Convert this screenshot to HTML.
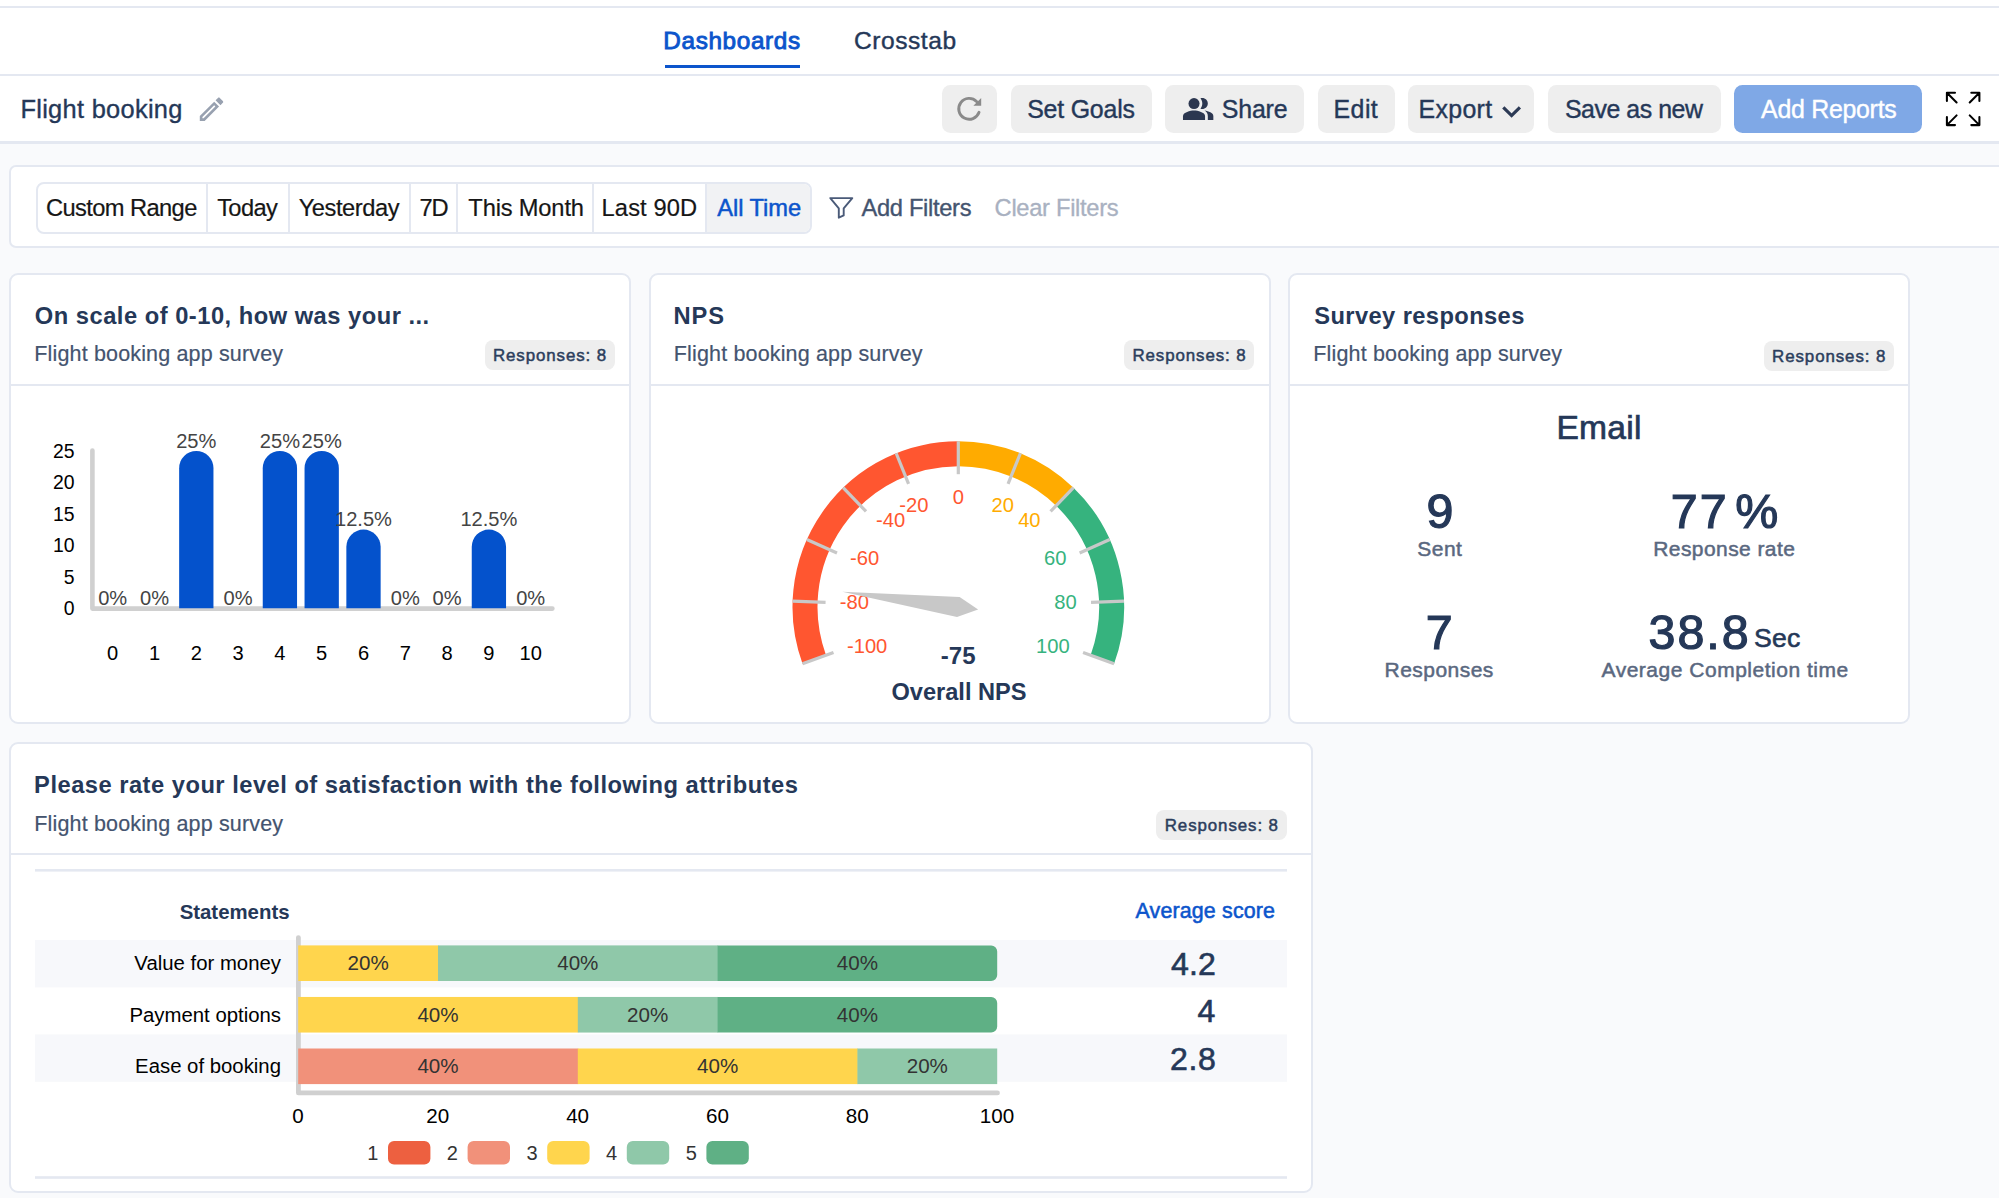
<!DOCTYPE html>
<html lang="en"><head><meta charset="utf-8"><title>Flight booking - Dashboards</title>
<style>
html,body{margin:0;padding:0}
body{width:1999px;height:1198px;overflow:hidden;background:#f9fafc;font-family:"Liberation Sans",sans-serif;position:relative}
.b{position:absolute}
button.b{border:0;padding:0;margin:0;display:block}
.t{position:absolute;margin:0;white-space:pre;line-height:0;font-weight:400;text-decoration:none}
svg{position:absolute;left:0;top:0;overflow:visible;pointer-events:none}
</style></head><body>
<nav class="tabs" aria-label="Report views">
<div class="b" style="left:0px;top:0px;width:1999px;height:142px;background:#fff"></div>
<div class="b" style="left:0px;top:5.5px;width:1999px;height:2px;background:#e4e8f1"></div>
<div class="b" style="left:0px;top:73.5px;width:1999px;height:2px;background:#e4e8f1"></div>
<a class="t" style="left:663.3px;top:40.78px;font-size:24.3px;color:#0c55cc;letter-spacing:0.648px;-webkit-text-stroke:0.9px #0c55cc;">Dashboards</a>
<div class="b" style="left:665px;top:64.8px;width:135px;height:3.2px;background:#0c55cc"></div>
<a class="t" style="left:854.05px;top:40.78px;font-size:24.6px;color:#253858;letter-spacing:0.516px;-webkit-text-stroke:0.4px #253858;">Crosstab</a>
</nav>
<header class="toolbar">
<div class="b" style="left:0px;top:141px;width:1999px;height:3.2px;background:#e4e8f1"></div>
<h1 class="t" style="left:20.42px;top:108.8px;font-size:25.4px;color:#253858;letter-spacing:0.298px;-webkit-text-stroke:0.35px #253858;">Flight booking</h1>
<button class="b" style="left:942.2px;top:85px;width:54.8px;height:48px;background:#eeeeee;border-radius:8.5px"></button>
<button class="b" style="left:1010.5px;top:85px;width:141.8px;height:48px;background:#eeeeee;border-radius:8.5px"></button>
<button class="b" style="left:1165.3px;top:85px;width:138.7px;height:48px;background:#eeeeee;border-radius:8.5px"></button>
<button class="b" style="left:1317.6px;top:85px;width:77.8px;height:48px;background:#eeeeee;border-radius:8.5px"></button>
<button class="b" style="left:1408.4px;top:85px;width:125.6px;height:48px;background:#eeeeee;border-radius:8.5px"></button>
<button class="b" style="left:1547.7px;top:85px;width:173.3px;height:48px;background:#eeeeee;border-radius:8.5px"></button>
<button class="b" style="left:1734.4px;top:85px;width:187.9px;height:48px;background:#7fa8e6;border-radius:8.5px"></button>
<span class="t" style="left:1027.22px;top:109.17px;font-size:24.9px;color:#253858;letter-spacing:-0.198px;-webkit-text-stroke:0.4px #253858;">Set Goals</span>
<span class="t" style="left:1221.72px;top:109.17px;font-size:24.9px;color:#253858;letter-spacing:-0.139px;-webkit-text-stroke:0.4px #253858;">Share</span>
<span class="t" style="left:1333.55px;top:109.17px;font-size:24.9px;color:#253858;letter-spacing:0.451px;-webkit-text-stroke:0.4px #253858;">Edit</span>
<span class="t" style="left:1418.45px;top:109.17px;font-size:24.9px;color:#253858;letter-spacing:0.359px;-webkit-text-stroke:0.4px #253858;">Export</span>
<span class="t" style="left:1564.92px;top:109.17px;font-size:24.9px;color:#253858;letter-spacing:-0.449px;-webkit-text-stroke:0.4px #253858;">Save as new</span>
<span class="t" style="left:1761.1px;top:109.17px;font-size:24.9px;color:#ffffff;letter-spacing:-0.273px;-webkit-text-stroke:0.4px #ffffff;">Add Reports</span>
<svg width="1999" height="1198" viewBox="0 0 1999 1198" role="img" aria-label="toolbar icons" font-family="Liberation Sans, sans-serif">
<path transform="translate(195.9 93.6) scale(1.3)" fill="#98a1b0" d="M14.06 9.02l.92.92L5.92 19H5v-.92l9.06-9.06M17.66 3c-.25 0-.51.1-.7.29l-1.83 1.83 3.75 3.75 1.83-1.83c.39-.39.39-1.02 0-1.41l-2.34-2.34c-.2-.2-.45-.29-.71-.29zm-3.6 3.19L3 17.25V21h3.75L17.81 9.94l-3.75-3.75z"/>
<path d="M979.06 112.27 A10.45 10.45 0 1 1 976.59 101.41" fill="none" stroke="#8a8a8a" stroke-width="2.9" stroke-linecap="round"/>
<path d="M981.2 97.9 V105.8 H973.4 Z" fill="#8a8a8a"/>
<g transform="translate(1181.6 92.5) scale(1.38)" fill="#2c3750"><path d="M16.67 13.13C18.04 14.06 19 15.32 19 17v3h4v-3c0-2.18-3.57-3.47-6.33-3.87z"/><circle cx="9" cy="8" r="4"/><path d="M15 12c2.21 0 4-1.79 4-4s-1.79-4-4-4c-.47 0-.91.1-1.33.24C14.5 5.27 15 6.58 15 8s-.5 2.73-1.33 3.76c.42.14.86.24 1.33.24z"/><path d="M9 13c-2.67 0-8 1.34-8 4v3h16v-3c0-2.66-5.33-4-8-4z"/></g>
<path d="M1503.3 107.4 L1511.6 115.6 L1519.9 107.4" fill="none" stroke="#2c3a55" stroke-width="3.2"/>
<path d="M1946.9 100.9 V92.8 H1955 M1946.9 92.8 L1956.6 102.5 M1971.3 92.8 H1979.4 V100.9 M1979.4 92.8 L1969.7 102.5 M1946.9 117 V125.1 H1955 M1946.9 125.1 L1956.6 115.4 M1979.4 117 V125.1 H1971.3 M1979.4 125.1 L1969.7 115.4" fill="none" stroke="#000" stroke-width="2.05" stroke-linecap="round" stroke-linejoin="round"/>
</svg>
</header>
<section class="filters" aria-label="Date range and filters">
<div class="b" style="left:9px;top:165px;width:2001px;height:83px;background:#fff;border:2px solid #e4e8f1;border-radius:7px;box-sizing:border-box"></div>
<div class="b" style="left:35.5px;top:181.5px;width:776px;height:52px;background:#fff;border:2px solid #e4e8f1;border-radius:8px;box-sizing:border-box"></div>
<div class="b" style="left:706px;top:183.5px;width:103.5px;height:48px;background:#f1f2f4;border-radius:0 6px 6px 0"></div>
<div class="b" style="left:205.7px;top:183px;width:2px;height:49px;background:#e4e8f1"></div>
<div class="b" style="left:287.6px;top:183px;width:2px;height:49px;background:#e4e8f1"></div>
<div class="b" style="left:408.6px;top:183px;width:2px;height:49px;background:#e4e8f1"></div>
<div class="b" style="left:456.3px;top:183px;width:2px;height:49px;background:#e4e8f1"></div>
<div class="b" style="left:591.8px;top:183px;width:2px;height:49px;background:#e4e8f1"></div>
<div class="b" style="left:705px;top:183px;width:2px;height:49px;background:#e4e8f1"></div>
<span class="t" style="left:45.89px;top:207.79px;font-size:23.7px;color:#161616;letter-spacing:-0.591px;-webkit-text-stroke:0.2px #161616;">Custom Range</span>
<span class="t" style="left:217.13px;top:207.79px;font-size:23.7px;color:#161616;letter-spacing:-0.593px;-webkit-text-stroke:0.2px #161616;">Today</span>
<span class="t" style="left:298.63px;top:207.79px;font-size:23.7px;color:#161616;letter-spacing:-0.445px;-webkit-text-stroke:0.2px #161616;">Yesterday</span>
<span class="t" style="left:419.49px;top:207.79px;font-size:23.7px;color:#161616;letter-spacing:-1.264px;-webkit-text-stroke:0.2px #161616;">7D</span>
<span class="t" style="left:468.33px;top:207.79px;font-size:23.7px;color:#161616;letter-spacing:-0.170px;-webkit-text-stroke:0.2px #161616;">This Month</span>
<span class="t" style="left:601.55px;top:207.79px;font-size:23.7px;color:#161616;letter-spacing:0.116px;-webkit-text-stroke:0.2px #161616;">Last 90D</span>
<span class="t" style="left:717.2px;top:207.79px;font-size:23.7px;color:#0c55cc;letter-spacing:-0.050px;-webkit-text-stroke:0.5px #0c55cc;">All Time</span>
<span class="t" style="left:861.5px;top:207.79px;font-size:23.7px;color:#44546f;letter-spacing:-0.323px;-webkit-text-stroke:0.35px #44546f;">Add Filters</span>
<span class="t" style="left:994.59px;top:207.79px;font-size:23.7px;color:#a9b1c1;letter-spacing:-0.299px;-webkit-text-stroke:0.3px #a9b1c1;">Clear Filters</span>
<svg width="1999" height="1198" viewBox="0 0 1999 1198" role="img" aria-label="filter icon" font-family="Liberation Sans, sans-serif">
<path d="M830.3 198.1 H852.3 L843.7 208.3 V215.4 L838.8 217.7 V208.3 Z" fill="none" stroke="#4a5a78" stroke-width="1.9" stroke-linejoin="round"/>
</svg>
</section>
<section class="card">
<div class="b" style="left:9px;top:272.5px;width:622px;height:451px;background:#fff;border:2px solid #e4e8f1;border-radius:9px;box-sizing:border-box"></div>
<div class="b" style="left:11px;top:383.5px;width:618px;height:2px;background:#e4e8f1"></div>
<h2 class="t" style="left:34.86px;top:315.79px;font-size:23.7px;color:#253858;font-weight:700;letter-spacing:0.501px;">On scale of 0-10, how was your ...</h2>
<span class="t" style="left:34.32px;top:354.35px;font-size:21.5px;color:#44546f;letter-spacing:0.153px;-webkit-text-stroke:0.2px #44546f;">Flight booking app survey</span>
<div class="b" style="left:484.5px;top:339.5px;width:130.3px;height:30.2px;background:#eeeeee;border-radius:8px"></div>
<span class="t" style="left:492.88px;top:355.64px;font-size:16.9px;color:#2c3e5d;letter-spacing:0.906px;-webkit-text-stroke:0.5px #2c3e5d;">Responses: 8</span>
<svg width="1999" height="1198" viewBox="0 0 1999 1198" role="img" aria-label="Bar chart of scores 0 to 10" font-family="Liberation Sans, sans-serif">
<path d="M92.4 450.6 V608.6 H552.4" fill="none" stroke="#d0d0d0" stroke-width="4.6" stroke-linecap="round" stroke-linejoin="round"/>
<path d="M179.15 608.2 V468.15 A17.15 17.15 0 0 1 213.45 468.15 V608.2 Z" fill="#0452cc"/>
<path d="M262.75 608.2 V468.15 A17.15 17.15 0 0 1 297.05 468.15 V608.2 Z" fill="#0452cc"/>
<path d="M304.55 608.2 V468.15 A17.15 17.15 0 0 1 338.85 468.15 V608.2 Z" fill="#0452cc"/>
<path d="M346.35 608.2 V546.75 A17.15 17.15 0 0 1 380.65 546.75 V608.2 Z" fill="#0452cc"/>
<path d="M471.75 608.2 V546.75 A17.15 17.15 0 0 1 506.05 546.75 V608.2 Z" fill="#0452cc"/>
<text x="112.7" y="605" text-anchor="middle" font-size="20.1" fill="#444">0%</text>
<text x="154.5" y="605" text-anchor="middle" font-size="20.1" fill="#444">0%</text>
<text x="196.3" y="447.8" text-anchor="middle" font-size="20.1" fill="#444">25%</text>
<text x="238.1" y="605" text-anchor="middle" font-size="20.1" fill="#444">0%</text>
<text x="279.9" y="447.8" text-anchor="middle" font-size="20.1" fill="#444">25%</text>
<text x="321.7" y="447.8" text-anchor="middle" font-size="20.1" fill="#444">25%</text>
<text x="363.5" y="526.4" text-anchor="middle" font-size="20.1" fill="#444">12.5%</text>
<text x="405.3" y="605" text-anchor="middle" font-size="20.1" fill="#444">0%</text>
<text x="447.1" y="605" text-anchor="middle" font-size="20.1" fill="#444">0%</text>
<text x="488.9" y="526.4" text-anchor="middle" font-size="20.1" fill="#444">12.5%</text>
<text x="530.7" y="605" text-anchor="middle" font-size="20.1" fill="#444">0%</text>
<text x="112.7" y="659.5" text-anchor="middle" font-size="20.1" fill="#000">0</text>
<text x="154.5" y="659.5" text-anchor="middle" font-size="20.1" fill="#000">1</text>
<text x="196.3" y="659.5" text-anchor="middle" font-size="20.1" fill="#000">2</text>
<text x="238.1" y="659.5" text-anchor="middle" font-size="20.1" fill="#000">3</text>
<text x="279.9" y="659.5" text-anchor="middle" font-size="20.1" fill="#000">4</text>
<text x="321.7" y="659.5" text-anchor="middle" font-size="20.1" fill="#000">5</text>
<text x="363.5" y="659.5" text-anchor="middle" font-size="20.1" fill="#000">6</text>
<text x="405.3" y="659.5" text-anchor="middle" font-size="20.1" fill="#000">7</text>
<text x="447.1" y="659.5" text-anchor="middle" font-size="20.1" fill="#000">8</text>
<text x="488.9" y="659.5" text-anchor="middle" font-size="20.1" fill="#000">9</text>
<text x="530.7" y="659.5" text-anchor="middle" font-size="20.1" fill="#000">10</text>
<text x="74.6" y="615.2" text-anchor="end" font-size="19.4" fill="#000">0</text>
<text x="74.6" y="583.76" text-anchor="end" font-size="19.4" fill="#000">5</text>
<text x="74.6" y="552.32" text-anchor="end" font-size="19.4" fill="#000">10</text>
<text x="74.6" y="520.88" text-anchor="end" font-size="19.4" fill="#000">15</text>
<text x="74.6" y="489.44" text-anchor="end" font-size="19.4" fill="#000">20</text>
<text x="74.6" y="458" text-anchor="end" font-size="19.4" fill="#000">25</text>
</svg>
</section>
<section class="card">
<div class="b" style="left:648.5px;top:272.5px;width:622px;height:451px;background:#fff;border:2px solid #e4e8f1;border-radius:9px;box-sizing:border-box"></div>
<div class="b" style="left:650.5px;top:383.5px;width:618px;height:2px;background:#e4e8f1"></div>
<h2 class="t" style="left:673.62px;top:315.79px;font-size:23.7px;color:#253858;font-weight:700;letter-spacing:0.838px;">NPS</h2>
<span class="t" style="left:673.82px;top:354.35px;font-size:21.5px;color:#44546f;letter-spacing:0.153px;-webkit-text-stroke:0.2px #44546f;">Flight booking app survey</span>
<div class="b" style="left:1124px;top:339.5px;width:130.3px;height:30.2px;background:#eeeeee;border-radius:8px"></div>
<span class="t" style="left:1132.38px;top:355.64px;font-size:16.9px;color:#2c3e5d;letter-spacing:0.906px;-webkit-text-stroke:0.5px #2c3e5d;">Responses: 8</span>
<svg width="1999" height="1198" viewBox="0 0 1999 1198" role="img" aria-label="NPS gauge" font-family="Liberation Sans, sans-serif">
<path d="M814.25 659.43 A153.3 153.3 0 0 1 958.3 453.7" fill="none" stroke="#ff5630" stroke-width="25"/>
<path d="M958.3 453.7 A153.3 153.3 0 0 1 1064.79 496.73" fill="none" stroke="#ffab00" stroke-width="25"/>
<path d="M1064.79 496.73 A153.3 153.3 0 0 1 1102.35 659.43" fill="none" stroke="#36b37e" stroke-width="25"/>
<line x1="802.5" y1="663.71" x2="833.51" y2="652.42" stroke="#c8c8c8" stroke-width="3.2"/>
<line x1="792.6" y1="601.21" x2="825.58" y2="602.37" stroke="#c8c8c8" stroke-width="3.2"/>
<line x1="806.83" y1="539.56" x2="836.98" y2="552.99" stroke="#c8c8c8" stroke-width="3.2"/>
<line x1="843.13" y1="487.73" x2="866.05" y2="511.47" stroke="#c8c8c8" stroke-width="3.2"/>
<line x1="896.19" y1="453.27" x2="908.55" y2="483.87" stroke="#c8c8c8" stroke-width="3.2"/>
<line x1="958.3" y1="441.2" x2="958.3" y2="474.2" stroke="#c8c8c8" stroke-width="3.2"/>
<line x1="1020.41" y1="453.27" x2="1008.05" y2="483.87" stroke="#c8c8c8" stroke-width="3.2"/>
<line x1="1073.47" y1="487.73" x2="1050.55" y2="511.47" stroke="#c8c8c8" stroke-width="3.2"/>
<line x1="1109.77" y1="539.56" x2="1079.62" y2="552.99" stroke="#c8c8c8" stroke-width="3.2"/>
<line x1="1124" y1="601.21" x2="1091.02" y2="602.37" stroke="#c8c8c8" stroke-width="3.2"/>
<line x1="1114.1" y1="663.71" x2="1083.09" y2="652.42" stroke="#c8c8c8" stroke-width="3.2"/>
<text x="846.95" y="653.23" text-anchor="start" font-size="20.2" fill="#ff5630">-100</text>
<text x="839.87" y="608.56" text-anchor="start" font-size="20.2" fill="#ff5630">-80</text>
<text x="850.04" y="564.5" text-anchor="start" font-size="20.2" fill="#ff5630">-60</text>
<text x="875.98" y="527.46" text-anchor="start" font-size="20.2" fill="#ff5630">-40</text>
<text x="913.91" y="512.23" text-anchor="middle" font-size="20.2" fill="#ff5630">-20</text>
<text x="958.3" y="503.6" text-anchor="middle" font-size="20.2" fill="#ff5630">0</text>
<text x="1002.69" y="512.23" text-anchor="middle" font-size="20.2" fill="#ffab00">20</text>
<text x="1040.62" y="527.46" text-anchor="end" font-size="20.2" fill="#ffab00">40</text>
<text x="1066.56" y="564.5" text-anchor="end" font-size="20.2" fill="#36b37e">60</text>
<text x="1076.73" y="608.56" text-anchor="end" font-size="20.2" fill="#36b37e">80</text>
<text x="1069.65" y="653.23" text-anchor="end" font-size="20.2" fill="#36b37e">100</text>
<path d="M978.13 609.61 L959.61 597.09 L842.3 591.73 L956.99 616.91 Z" fill="#c8c8c8"/>
<text x="958.2" y="664.2" text-anchor="middle" font-size="24" fill="#253858" font-weight="700">-75</text>
<text x="959" y="700" text-anchor="middle" font-size="23.6" fill="#253858" font-weight="700">Overall NPS</text>
</svg>
</section>
<section class="card">
<div class="b" style="left:1288px;top:272.5px;width:622px;height:451px;background:#fff;border:2px solid #e4e8f1;border-radius:9px;box-sizing:border-box"></div>
<div class="b" style="left:1290px;top:383.5px;width:618px;height:2px;background:#e4e8f1"></div>
<h2 class="t" style="left:1314.23px;top:315.79px;font-size:23.7px;color:#253858;font-weight:700;letter-spacing:0.403px;">Survey responses</h2>
<span class="t" style="left:1313.32px;top:354.35px;font-size:21.5px;color:#44546f;letter-spacing:0.153px;-webkit-text-stroke:0.2px #44546f;">Flight booking app survey</span>
<div class="b" style="left:1763.7px;top:340.7px;width:130.3px;height:30.2px;background:#eeeeee;border-radius:8px"></div>
<span class="t" style="left:1772.08px;top:356.84px;font-size:16.9px;color:#2c3e5d;letter-spacing:0.906px;-webkit-text-stroke:0.5px #2c3e5d;">Responses: 8</span>
<h3 class="t" style="left:1556.38px;top:428.16px;font-size:33.6px;color:#253858;letter-spacing:0.256px;-webkit-text-stroke:0.7px #253858;">Email</h3>
<span class="t" style="left:1426.39px;top:510.83px;font-size:48.4px;color:#253858;-webkit-text-stroke:1.2px #253858;">9</span>
<span class="t" style="left:1417.34px;top:549.32px;font-size:21px;color:#5a6880;letter-spacing:0.462px;-webkit-text-stroke:0.5px #5a6880;">Sent</span>
<span class="t" style="left:1670.83px;top:510.83px;font-size:48.4px;color:#253858;letter-spacing:1.895px;-webkit-text-stroke:1.2px #253858;">77</span>
<span class="t" style="left:1735.25px;top:510.83px;font-size:48.4px;color:#253858;-webkit-text-stroke:1.2px #253858;">%</span>
<span class="t" style="left:1653.26px;top:549.32px;font-size:21px;color:#5a6880;letter-spacing:0.417px;-webkit-text-stroke:0.5px #5a6880;">Response rate</span>
<span class="t" style="left:1425.79px;top:632.23px;font-size:48.4px;color:#253858;-webkit-text-stroke:1.2px #253858;">7</span>
<span class="t" style="left:1384.56px;top:670.02px;font-size:21px;color:#5a6880;letter-spacing:0.467px;-webkit-text-stroke:0.5px #5a6880;">Responses</span>
<span class="t" style="left:1648.59px;top:632.23px;font-size:48.4px;color:#253858;letter-spacing:1.958px;-webkit-text-stroke:1.2px #253858;">38.8</span>
<span class="t" style="left:1753.97px;top:638.08px;font-size:26.6px;color:#253858;letter-spacing:0.306px;-webkit-text-stroke:0.6px #253858;">Sec</span>
<span class="t" style="left:1601.5px;top:670.02px;font-size:21px;color:#5a6880;letter-spacing:0.511px;-webkit-text-stroke:0.5px #5a6880;">Average Completion time</span>
</section>
<section class="card">
<div class="b" style="left:9px;top:742px;width:1304px;height:450.5px;background:#fff;border:2px solid #e4e8f1;border-radius:9px;box-sizing:border-box"></div>
<div class="b" style="left:11px;top:853px;width:1300px;height:2px;background:#e4e8f1"></div>
<h2 class="t" style="left:34.12px;top:785.29px;font-size:23.7px;color:#253858;font-weight:700;letter-spacing:0.496px;">Please rate your level of satisfaction with the following attributes</h2>
<span class="t" style="left:34.32px;top:823.85px;font-size:21.5px;color:#44546f;letter-spacing:0.153px;-webkit-text-stroke:0.2px #44546f;">Flight booking app survey</span>
<div class="b" style="left:1156.4px;top:810.2px;width:130.3px;height:30.2px;background:#eeeeee;border-radius:8px"></div>
<span class="t" style="left:1164.78px;top:826.34px;font-size:16.9px;color:#2c3e5d;letter-spacing:0.906px;-webkit-text-stroke:0.5px #2c3e5d;">Responses: 8</span>
<svg width="1999" height="1198" viewBox="0 0 1999 1198" role="img" aria-label="Stacked bar chart of satisfaction ratings" font-family="Liberation Sans, sans-serif">
<rect x="35" y="869" width="1252" height="2.6" fill="#e4e8f1"/>
<rect x="35" y="1176.2" width="1252" height="2.6" fill="#e4e8f1"/>
<rect x="35" y="940" width="1252" height="47.4" fill="#f7f8fb"/>
<rect x="35" y="1034.4" width="1252" height="47.4" fill="#f7f8fb"/>
<text x="234.6" y="918.6" text-anchor="middle" font-size="20.4" fill="#253858" font-weight="700">Statements</text>
<path d="M298.4 937.6 V1092.9 H997.5" fill="none" stroke="#d0d0d0" stroke-width="4.8" stroke-linecap="round" stroke-linejoin="round"/>
<text x="281" y="970.1" text-anchor="end" font-size="20.35" fill="#000">Value for money</text>
<rect x="298.2" y="945.4" width="140.3" height="35.6" fill="#ffd54d"/>
<text x="368.1" y="970.2" text-anchor="middle" font-size="20.6" fill="#333">20%</text>
<rect x="438" y="945.4" width="280.1" height="35.6" fill="#8fc8a9"/>
<text x="577.8" y="970.2" text-anchor="middle" font-size="20.6" fill="#333">40%</text>
<path d="M717.6 945.4 H991.2 a6 6 0 0 1 6 6 V975 a6 6 0 0 1 -6 6 H717.6 Z" fill="#5fb085"/>
<text x="857.4" y="970.2" text-anchor="middle" font-size="20.6" fill="#333">40%</text>
<text x="281" y="1021.65" text-anchor="end" font-size="20.35" fill="#000">Payment options</text>
<rect x="298.2" y="996.95" width="280.1" height="35.6" fill="#ffd54d"/>
<text x="438" y="1021.75" text-anchor="middle" font-size="20.6" fill="#333">40%</text>
<rect x="577.8" y="996.95" width="140.3" height="35.6" fill="#8fc8a9"/>
<text x="647.7" y="1021.75" text-anchor="middle" font-size="20.6" fill="#333">20%</text>
<path d="M717.6 996.95 H991.2 a6 6 0 0 1 6 6 V1026.55 a6 6 0 0 1 -6 6 H717.6 Z" fill="#5fb085"/>
<text x="857.4" y="1021.75" text-anchor="middle" font-size="20.6" fill="#333">40%</text>
<text x="281" y="1073.2" text-anchor="end" font-size="20.35" fill="#000">Ease of booking</text>
<rect x="298.2" y="1048.5" width="280.1" height="35.6" fill="#f1917a"/>
<text x="438" y="1073.3" text-anchor="middle" font-size="20.6" fill="#333">40%</text>
<rect x="577.8" y="1048.5" width="280.1" height="35.6" fill="#ffd54d"/>
<text x="717.6" y="1073.3" text-anchor="middle" font-size="20.6" fill="#333">40%</text>
<rect x="857.4" y="1048.5" width="139.8" height="35.6" fill="#8fc8a9"/>
<text x="927.3" y="1073.3" text-anchor="middle" font-size="20.6" fill="#333">20%</text>
<text x="298" y="1123.4" text-anchor="middle" font-size="20.6" fill="#000">0</text>
<text x="437.8" y="1123.4" text-anchor="middle" font-size="20.6" fill="#000">20</text>
<text x="577.6" y="1123.4" text-anchor="middle" font-size="20.6" fill="#000">40</text>
<text x="717.4" y="1123.4" text-anchor="middle" font-size="20.6" fill="#000">60</text>
<text x="857.2" y="1123.4" text-anchor="middle" font-size="20.6" fill="#000">80</text>
<text x="997" y="1123.4" text-anchor="middle" font-size="20.6" fill="#000">100</text>
<rect x="388" y="1141" width="42.4" height="23.4" rx="6" fill="#ed6040"/>
<text x="372.8" y="1160" text-anchor="middle" font-size="20" fill="#333">1</text>
<rect x="467.6" y="1141" width="42.4" height="23.4" rx="6" fill="#f1917a"/>
<text x="452.4" y="1160" text-anchor="middle" font-size="20" fill="#333">2</text>
<rect x="547.2" y="1141" width="42.4" height="23.4" rx="6" fill="#ffd54d"/>
<text x="532" y="1160" text-anchor="middle" font-size="20" fill="#333">3</text>
<rect x="626.8" y="1141" width="42.4" height="23.4" rx="6" fill="#8fc8a9"/>
<text x="611.6" y="1160" text-anchor="middle" font-size="20" fill="#333">4</text>
<rect x="706.4" y="1141" width="42.4" height="23.4" rx="6" fill="#5fb085"/>
<text x="691.2" y="1160" text-anchor="middle" font-size="20" fill="#333">5</text>
</svg>
<span class="t" style="left:1135.5px;top:910.58px;font-size:21.4px;color:#0c55cc;letter-spacing:0.164px;-webkit-text-stroke:0.55px #0c55cc;">Average score</span>
<span class="t" style="left:1171px;top:964.18px;font-size:32.1px;color:#253858;letter-spacing:0.090px;-webkit-text-stroke:0.6px #253858;">4.2</span>
<span class="t" style="left:1197.45px;top:1011.08px;font-size:32.1px;color:#253858;-webkit-text-stroke:0.6px #253858;">4</span>
<span class="t" style="left:1170px;top:1058.68px;font-size:32.1px;color:#253858;letter-spacing:0.591px;-webkit-text-stroke:0.6px #253858;">2.8</span>
</section>
</body></html>
